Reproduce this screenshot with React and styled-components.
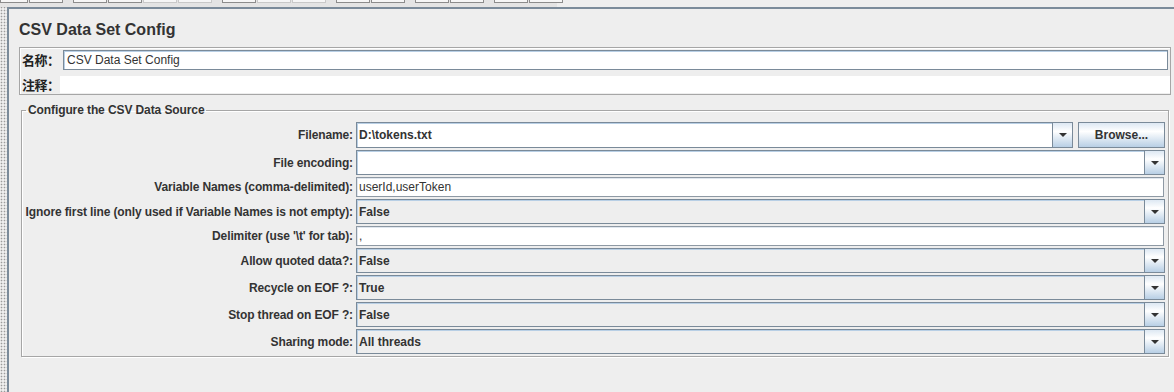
import React from 'react';
import styled, { createGlobalStyle } from 'styled-components';

const GlobalStyle = createGlobalStyle`
  html, body, #root {
    height: 100%;
  }
  body {
    margin: 0;
    background: #eeeeee;
    font-family: "Liberation Sans", Arial, "Noto Sans CJK SC", sans-serif;
    font-size: 12px;
    color: #333333;
    overflow: hidden;
  }
  * {
    box-sizing: border-box;
  }
`;

const Page = styled.div`
  height: 100%;
  display: flex;
  flex-direction: column;
`;

const Toolbar = styled.div`
  display: flex;
  gap: 10px;
  width: 557px;
  height: 7px;
  flex-shrink: 0;
  background: #e4e4e4;
`;

const ToolGroup = styled.div`
  display: flex;
  gap: 1px;
`;

const ToolButton = styled.div`
  width: ${p => p.$w || 34}px;
  height: 3px;
  background: #f6f6f6;
  border: 1px solid ${p => (p.$off ? '#c9c9c9' : '#8c8c8c')};
  border-top: none;
`;

const Body = styled.div`
  flex: 1;
  display: flex;
  min-height: 0;
`;

const Splitter = styled.div`
  width: 7px;
  flex-shrink: 0;
  background-image: radial-gradient(circle, #9c9c9c 0.7px, transparent 1.1px);
  background-size: 3px 3px;
  background-position: 0 2px;
`;

const Panel = styled.div`
  flex: 1;
  min-width: 0;
  border-top: 2px solid #7b8b9a;
  border-left: 2px solid #7b8b9a;
  padding: 11px 3px 0 10px;
`;

const Title = styled.div`
  font-size: 16px;
  line-height: 20px;
  font-weight: bold;
  color: #333333;
`;

const NamePanel = styled.div`
  margin-top: 7px;
  display: grid;
  grid-template-columns: 38px 1fr;
  grid-auto-rows: auto;
  row-gap: 6px;
  padding: 2px 2px 1px 2px;
  border: 1px solid #a6a6a6;
  box-shadow: inset 1px 1px 0 #ffffff;
`;

const NameLabel = styled.div`
  display: flex;
  align-items: center;
  height: ${p => p.$h}px;
  line-height: ${p => p.$h}px;
  overflow: visible;
  font-family: "Noto Sans CJK SC", sans-serif;
  font-weight: bold;
  font-size: 13px;
  letter-spacing: -0.5px;
  white-space: nowrap;
  color: #222222;
`;

const NameField = styled.div`
  height: 20px;
  margin-left: 3px;
  display: flex;
  align-items: center;
  padding-left: 3px;
  background: #ffffff;
  border: 1px solid #7a8a99;
  box-shadow: inset 1px 1px 0 #b8cfe5;
`;

const CommentField = styled.div`
  height: 17px;
  margin-right: -2px;
  background: #ffffff;
`;

const Section = styled.fieldset`
  margin: 8px 2px 0;
  min-width: 0;
  padding: 5px 3px 2px 4px;
  border: 1px solid #a6a6a6;
  box-shadow: inset 1px 1px 0 #ffffff, 1px 1px 0 #ffffff;
  display: grid;
  grid-template-columns: 327px 1fr;
  column-gap: 3px;
  row-gap: 2px;
`;

const Legend = styled.legend`
  padding: 0 2px;
  margin: 0;
  font-weight: bold;
  font-size: 12px;
  line-height: 14px;
  letter-spacing: -0.1px;
`;

const Label = styled.div`
  display: flex;
  align-items: center;
  justify-content: flex-end;
  font-weight: bold;
  letter-spacing: -0.12px;
  white-space: nowrap;
`;

const FieldRow = styled.div`
  display: flex;
  gap: 5px;
  height: ${p => p.$h || 25}px;
`;

const Combo = styled.div`
  flex: 1;
  display: flex;
  border: 1px solid #7a8a99;
  background: ${p => (p.$editable ? '#ffffff' : '#eeeeee')};
  box-shadow: inset 1px 1px 0 #b8cfe5;
`;

const ComboValue = styled.div`
  flex: 1;
  display: flex;
  align-items: center;
  padding-left: 2px;
  font-weight: bold;
  white-space: nowrap;
`;

const ArrowButton = styled.div`
  width: 20px;
  flex-shrink: 0;
  display: flex;
  align-items: center;
  justify-content: center;
  border-left: 1px solid #7a8a99;
  background: linear-gradient(#dde8f3, #ffffff 35%, #b8cfe5);
`;

const Triangle = styled.span`
  width: 0;
  height: 0;
  border-left: 4px solid transparent;
  border-right: 4px solid transparent;
  border-top: 4px solid #333333;
`;

const Button = styled.div`
  width: 87px;
  display: flex;
  align-items: center;
  justify-content: center;
  border: 1px solid #7a8a99;
  background: linear-gradient(#dde8f3, #ffffff 35%, #b8cfe5);
  font-weight: bold;
`;

const TextField = styled.div`
  height: 20px;
  margin-right: 1px;
  display: flex;
  align-items: center;
  padding-left: 2px;
  background: #ffffff;
  border: 1px solid #8e99a4;
  box-shadow: inset 1px 1px 0 #dfe6ee;
  white-space: nowrap;
`;

const toolGroups = [
  [{ w: 28 }, {}],
  [{}, {}, { off: true }, { off: true }],
  [{}, { off: true }, { off: true }],
  [{}, {}],
  [{}, {}],
  [{}, {}],
];

const fields = [
  { label: 'Filename:', type: 'file', value: 'D:\\tokens.txt' },
  { label: 'File encoding:', type: 'edit', value: '' },
  { label: 'Variable Names (comma-delimited):', type: 'text', value: 'userId,userToken' },
  { label: 'Ignore first line (only used if Variable Names is not empty):', type: 'combo', value: 'False' },
  { label: "Delimiter (use '\\t' for tab):", type: 'text', value: ',' },
  { label: 'Allow quoted data?:', type: 'combo', value: 'False' },
  { label: 'Recycle on EOF ?:', type: 'combo', value: 'True' },
  { label: 'Stop thread on EOF ?:', type: 'combo', value: 'False' },
  { label: 'Sharing mode:', type: 'combo', value: 'All threads' },
];

const ComboBox = ({ value, editable }) => (
  <Combo $editable={editable}>
    <ComboValue>{value}</ComboValue>
    <ArrowButton>
      <Triangle />
    </ArrowButton>
  </Combo>
);

const Field = ({ type, value }) => {
  if (type === 'text') return <TextField>{value}</TextField>;
  if (type === 'file') {
    return (
      <FieldRow $h={26}>
        <ComboBox value={value} editable />
        <Button>Browse...</Button>
      </FieldRow>
    );
  }
  return (
    <FieldRow>
      <ComboBox value={value} editable={type === 'edit'} />
    </FieldRow>
  );
};

const App = () => {
  return (
    <Page>
      <GlobalStyle />
      <Toolbar>
        {toolGroups.map((group, i) => (
          <ToolGroup key={i}>
            {group.map((b, j) => (
              <ToolButton key={j} $w={b.w} $off={b.off} />
            ))}
          </ToolGroup>
        ))}
      </Toolbar>
      <Body>
        <Splitter />
        <Panel>
          <Title>CSV Data Set Config</Title>
          <NamePanel>
            <NameLabel $h={20}>名称：</NameLabel>
            <NameField>CSV Data Set Config</NameField>
            <NameLabel $h={17}>注释：</NameLabel>
            <CommentField />
          </NamePanel>
          <Section>
            <Legend>Configure the CSV Data Source</Legend>
            {fields.map(f => (
              <React.Fragment key={f.label}>
                <Label>{f.label}</Label>
                <Field type={f.type} value={f.value} />
              </React.Fragment>
            ))}
          </Section>
        </Panel>
      </Body>
    </Page>
  );
};

export default App;
